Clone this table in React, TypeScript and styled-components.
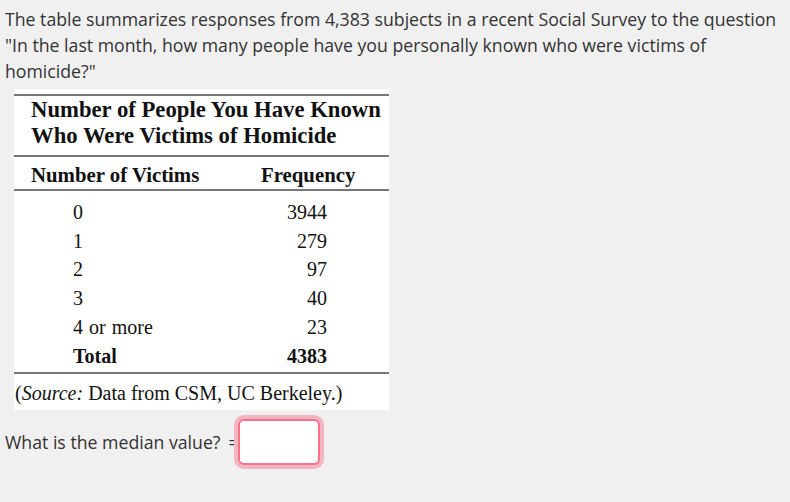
import React from 'react';
import styled, { createGlobalStyle } from 'styled-components';

const GlobalStyle = createGlobalStyle`
	body {
		margin: 0;
		background: #f0f0f0;
	}
`;

type Row = { victims: string; frequency: string; total?: boolean };

const rows: Row[] = [
	{ victims: '0', frequency: '3944' },
	{ victims: '1', frequency: '279' },
	{ victims: '2', frequency: '97' },
	{ victims: '3', frequency: '40' },
	{ victims: '4 or more', frequency: '23' },
	{ victims: 'Total', frequency: '4383', total: true },
];

const App: React.FC = () => {
	return (
		<Page>
			<GlobalStyle />
			<Question>
				The table summarizes responses from 4,383 subjects in a recent Social Survey to the question
				<br />
				"In the last month, how many people have you personally known who were victims of
				<br />
				homicide?"
			</Question>
			<TablePanel>
				<Rule />
				<Title>
					Number of People You Have Known
					<br />
					Who Were Victims of Homicide
				</Title>
				<Rule />
				<HeaderRow>
					<span>Number of Victims</span>
					<span>Frequency</span>
				</HeaderRow>
				<Rule />
				<Body>
					{rows.map((row) => (
						<DataRow key={row.victims} $total={row.total}>
							<VictimCell>{row.victims}</VictimCell>
							<FrequencyCell>{row.frequency}</FrequencyCell>
						</DataRow>
					))}
				</Body>
				<Rule />
				<Source>
					(<em>Source:</em> Data from CSM, UC Berkeley.)
				</Source>
			</TablePanel>
			<AnswerLine>
				<span>What is the median value?</span>
				<Equals>=</Equals>
				<AnswerInput type="text" aria-label="median value" />
			</AnswerLine>
		</Page>
	);
};
export default App;

const Page = styled.div`
	padding: 6px 5px;
	font-family: 'Open Sans', 'Noto Sans', sans-serif;
	font-size: 17.7px;
	color: #333;
`;

const Question = styled.p`
	margin: 0;
	line-height: 26px;
	white-space: nowrap;
`;

const TablePanel = styled.div`
	margin: 5px 0 0 9px;
	width: 375px;
	padding: 5px 0 4px;
	background: #fff;
	font-family: 'Liberation Serif', 'Times New Roman', serif;
	color: #111;
`;

const Rule = styled.div`
	height: 2px;
	background: #777;
`;

const Title = styled.div`
	padding: 1px 0 6px 17px;
	font-size: 22.7px;
	font-weight: bold;
	line-height: 26px;
	white-space: nowrap;
`;

const HeaderRow = styled.div`
	display: grid;
	grid-template-columns: 230px 1fr;
	padding: 5px 0 1px 17px;
	font-size: 20.8px;
	font-weight: bold;
	line-height: 26px;
`;

const Body = styled.div`
	padding: 7px 0 1px;
`;

const DataRow = styled.div<{ $total?: boolean }>`
	display: grid;
	grid-template-columns: 194px 60px;
	padding-left: 59px;
	height: 28.8px;
	align-items: center;
	font-size: 20px;
	font-weight: ${(props) => (props.$total ? 'bold' : 'normal')};
`;

const VictimCell = styled.span`
	word-spacing: 1px;
`;

const FrequencyCell = styled.span`
	text-align: right;
`;

const Source = styled.div`
	padding: 6px 0 0 1px;
	font-size: 20px;
	line-height: 26px;
	white-space: nowrap;
`;

const AnswerLine = styled.div`
	display: flex;
	align-items: center;
	margin-top: 9px;
`;

const Equals = styled.span`
	margin-left: 8px;
`;

const AnswerInput = styled.input`
	box-sizing: border-box;
	width: 82px;
	height: 46px;
	margin-left: -1px;
	border: 2px solid #fd6e87;
	border-radius: 6px;
	box-shadow: 0 0 0 4px #f2b6c3;
	background: #fff;
	outline: none;
`;
